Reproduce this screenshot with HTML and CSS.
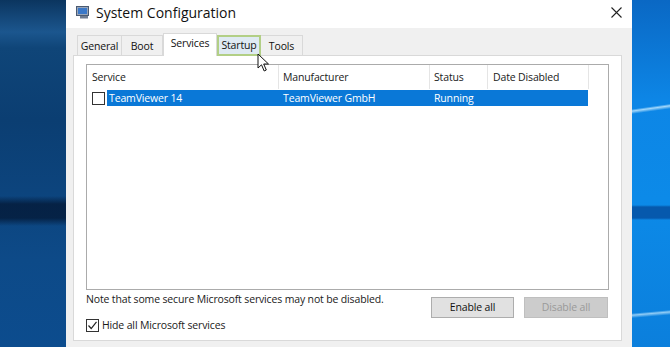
FILE: index.html
```html
<!DOCTYPE html>
<html lang="en">
  <head>
    <meta charset="UTF-8" />
    <meta name="viewport" content="width=device-width, initial-scale=1.0" />
    <title>System Configuration</title>
    <link rel="stylesheet" href="styles.css">
  </head>
  <body>
    <div class="desktop-left"></div>
    <div class="dialog">
      <div class="titlebar">
        <svg class="app-icon" width="14" height="13" viewBox="0 0 14 13">
          <rect x="0.5" y="0.5" width="12" height="9" fill="#9aa6b8" stroke="#4a5a72"/>
          <rect x="2" y="2" width="9" height="6" fill="#3b78c8"/>
          <rect x="4" y="10" width="8" height="2.5" fill="#6e7b90"/>
        </svg>
        <span class="title">System Configuration</span>
        <svg class="close" width="11" height="11" viewBox="0 0 11 11">
          <path d="M0.5 0.5 L10.5 10.5 M10.5 0.5 L0.5 10.5" stroke="#222" stroke-width="1.1"/>
        </svg>
      </div>
      <div class="body">
        <div class="tabs">
          <div class="tab tab-general">General</div>
          <div class="tab tab-boot">Boot</div>
          <div class="tab tab-services active">Services</div>
          <div class="tab tab-startup hover">Startup</div>
          <div class="tab tab-tools">Tools</div>
        </div>
        <div class="panel">
          <div class="listbox">
            <div class="list-head">
              <div class="col c1">Service</div>
              <div class="col c2">Manufacturer</div>
              <div class="col c3">Status</div>
              <div class="col c4">Date Disabled</div>
            </div>
            <div class="list-row">
              <span class="check"></span>
              <div class="selected">
                <div class="cell s1">TeamViewer 14</div>
                <div class="cell s2">TeamViewer GmbH</div>
                <div class="cell s3">Running</div>
                <div class="cell s4"></div>
              </div>
            </div>
          </div>
          <div class="bottom">
            <div class="bottom-left">
              <div class="note">Note that some secure Microsoft services may not be disabled.</div>
              <label class="hide-ms">
                <span class="check checked">
                  <svg width="11" height="11" viewBox="0 0 11 11"><path d="M1.5 5.5 L4.2 8.5 L9.5 1.8" fill="none" stroke="#222" stroke-width="1.2"/></svg>
                </span>
                Hide all Microsoft services
              </label>
            </div>
            <div class="buttons">
              <div class="btn">Enable all</div>
              <div class="btn disabled">Disable all</div>
            </div>
          </div>
        </div>
      </div>
      <svg class="cursor" width="14" height="20" viewBox="0 0 14 20">
        <path d="M1 1 L1 15 L4.5 11.8 L7.2 18 L9.3 17 L6.7 11 L11.5 11 Z" fill="#fff" stroke="#111" stroke-width="1" stroke-linejoin="round"/>
      </svg>
    </div>
    <div class="desktop-right"></div>
  </body>
</html>
```

FILE: styles.css
```css
body {
  margin: 0;
  width: 670px;
  height: 347px;
  overflow: hidden;
  display: flex;
  font-family: "Open Sans", "Noto Sans", sans-serif;
  font-size: 10.5px;
  letter-spacing: -0.15px;
  color: #1a1a1a;
}
.desktop-left {
  width: 66px;
  background:
    linear-gradient(180deg, rgba(0,0,0,0) 0, rgba(0,0,0,0) 196px, rgba(3,22,50,0.75) 204px, rgba(3,22,50,0.75) 218px, rgba(0,0,0,0) 226px),
    linear-gradient(180deg, #0b355f 0, #1b568e 32px, #0f4578 48px, #0b3e72 120px, #0d4a88 260px, #0c4c8e 347px);
}
.desktop-right {
  width: 38px;
  background:
    linear-gradient(172deg, transparent 108px, rgba(200,235,255,0.8) 110px, transparent 113px),
    linear-gradient(180deg, transparent 205px, #0659ad 207px, #0659ad 218px, transparent 220px),
    linear-gradient(175deg, transparent 312px, rgba(200,235,255,0.7) 314px, transparent 317px),
    linear-gradient(180deg, #0a68c4 0, #0d86e6 100px, #0c8ae8 200px, #0b7fdc 347px);
}
.dialog {
  position: relative;
  width: 566px;
  background: #f0f0f0;
  display: flex;
  flex-direction: column;
}
.titlebar {
  height: 28px;
  box-sizing: border-box;
  padding: 0 0 4px 10px;
  background: #fff;
  display: flex;
  align-items: center;
}
.title {
  margin-left: 6px;
  font-size: 14px;
  letter-spacing: 0;
  color: #111;
}
.close {
  margin-left: auto;
  margin-right: 10px;
}
.body {
  padding: 5px 10px 0 7px;
}
.tabs {
  display: flex;
  height: 22px;
  padding-left: 4px;
}
.tab {
  margin-top: 2px;
  height: 20px;
  line-height: 20px;
  box-sizing: border-box;
  border: 1px solid #d9d9d9;
  border-bottom: none;
  background: #f0f0f0;
  text-align: center;
  color: #111;
}
.tab-general { width: 45px; }
.tab-boot { width: 41px; border-left: none; }
.tab-services { width: 54px; }
.tab-startup { width: 44px; }
.tab-tools { width: 42px; border-left: none; }
.tab.active {
  margin-top: 0;
  height: 23px;
  background: #fff;
  border-color: #d9d9d9;
  position: relative;
  z-index: 1;
  line-height: 18px;
}
.tab.hover {
  background: #dfeaf3;
  border: 2px solid #b2cf86;
  height: 21px;
  line-height: 17px;
}
.panel {
  height: 286px;
  box-sizing: border-box;
  background: #fff;
  border: 1px solid #d9d9d9;
  padding: 8px 12px 0 12px;
}
.listbox {
  height: 226px;
  box-sizing: border-box;
  border: 1px solid #ababab;
}
.list-head {
  display: flex;
  height: 24px;
}
.col {
  box-sizing: border-box;
  border-right: 1px solid #e5e5e5;
  line-height: 24px;
  color: #1a1a1a;
}
.c1 { width: 192px; padding-left: 5px; }
.c2 { width: 151px; padding-left: 4px; }
.c3 { width: 58px; padding-left: 4px; }
.c4 { width: 101px; padding-left: 5px; }
.list-row {
  display: flex;
  align-items: center;
  height: 16px;
  margin-top: 1px;
  padding-left: 5px;
}
.check {
  width: 13px;
  height: 13px;
  box-sizing: border-box;
  border: 1px solid #333;
  background: #fff;
  display: inline-flex;
  align-items: center;
  justify-content: center;
}
.list-row .check {
  margin-right: 2px;
}
.selected {
  display: flex;
  height: 16px;
  background: #0a78d7;
  color: #fff;
  line-height: 16px;
}
.cell { box-sizing: border-box; }
.s1 { width: 172px; padding-left: 2px; }
.s2 { width: 151px; padding-left: 4px; }
.s3 { width: 58px; padding-left: 4px; }
.s4 { width: 100px; }
.bottom {
  display: flex;
  justify-content: space-between;
  margin-top: 1px;
}
.note {
  line-height: 17px;
}
.hide-ms {
  display: flex;
  align-items: center;
  gap: 3px;
  margin-top: 10px;
  line-height: 14px;
}
.buttons {
  display: flex;
  gap: 10px;
  margin-top: 6px;
  margin-right: 1px;
}
.btn {
  width: 83px;
  height: 21px;
  box-sizing: border-box;
  border: 1px solid #adadad;
  background: #e1e1e1;
  text-align: center;
  line-height: 19px;
  color: #111;
}
.btn.disabled {
  width: 84px;
  background: #cccccc;
  border-color: #bfbfbf;
  color: #9a9a9a;
}
.cursor {
  position: absolute;
  left: 191px;
  top: 53px;
}
```
